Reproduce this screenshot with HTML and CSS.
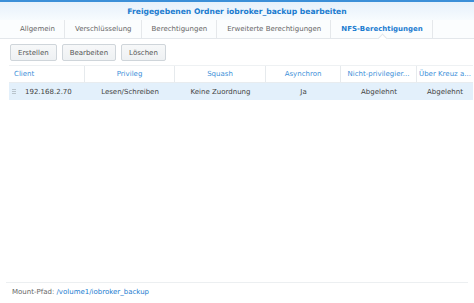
FILE: index.html
```html
<!DOCTYPE html>
<html>
<head>
<meta charset="utf-8">
<link rel="stylesheet" href="styles.css">
</head>
<body>
<div class="window">
  <div class="titlebar">Freigegebenen Ordner iobroker_backup bearbeiten</div>
  <div class="tabs">
    <div class="tab">Allgemein</div>
    <div class="tab">Verschlüsselung</div>
    <div class="tab">Berechtigungen</div>
    <div class="tab">Erweiterte Berechtigungen</div>
    <div class="tab active">NFS-Berechtigungen<span class="notch"></span></div>
  </div>
  <div class="toolbar">
    <button class="btn">Erstellen</button>
    <button class="btn">Bearbeiten</button>
    <button class="btn">Löschen</button>
  </div>
  <div class="grid">
    <div class="row head">
      <div class="cell c1 left">Client</div>
      <div class="cell c2">Privileg</div>
      <div class="cell c3">Squash</div>
      <div class="cell c4">Asynchron</div>
      <div class="cell c5">Nicht-privilegier...</div>
      <div class="cell c6">Über Kreuz a...</div>
    </div>
    <div class="row data">
      <div class="cell c1 first"><span class="handle"></span>192.168.2.70</div>
      <div class="cell c2">Lesen/Schreiben</div>
      <div class="cell c3">Keine Zuordnung</div>
      <div class="cell c4">Ja</div>
      <div class="cell c5">Abgelehnt</div>
      <div class="cell c6">Abgelehnt</div>
    </div>
  </div>
  <div class="spacer"></div>
  <div class="footer">Mount-Pfad: <span class="path">/volume1/iobroker_backup</span></div>
</div>
</body>
</html>
```
FILE: styles.css
```css
html, body {
  margin: 0;
  padding: 0;
  background: #ffffff;
}
body {
  font-family: "DejaVu Sans", Verdana, sans-serif;
  font-size: 7px;
  color: #555;
}
.window {
  width: 474px;
  height: 303px;
  display: flex;
  flex-direction: column;
  border-top: 2px solid #3b8fd8;
  box-sizing: border-box;
  background: #fff;
}
.titlebar {
  height: 18px;
  line-height: 20px;
  text-align: center;
  font-weight: bold;
  font-size: 7.6px;
  color: #1b7cd0;
  background: linear-gradient(#e6f1fb, #f7fbfe);
}
.tabs {
  display: flex;
  height: 18px;
  padding-left: 10px;
  border-bottom: 1px solid #e3e7eb;
  background: #fbfdfe;
}
.tab {
  position: relative;
  padding: 0 9px 0 10px;
  line-height: 18px;
  color: #666;
  border-right: 1px solid #e5e8eb;
}
.tab.active {
  color: #1b7cd0;
  font-weight: bold;
}
.notch {
  position: absolute;
  left: 50%;
  bottom: -4px;
  width: 6px;
  height: 6px;
  margin-left: -3px;
  background: #fff;
  border-left: 1px solid #e3e7eb;
  border-top: 1px solid #e3e7eb;
  transform: rotate(45deg);
}
.toolbar {
  display: flex;
  gap: 5px;
  padding: 5px 10px 4px;
}
.btn {
  font-family: inherit;
  font-size: 7px;
  color: #555;
  height: 17px;
  padding: 0 7px;
  background: linear-gradient(#f7f8f9, #eef1f3);
  border: 1px solid #cfd5da;
  border-radius: 2px;
}
.grid {
  display: flex;
  flex-direction: column;
}
.row {
  display: flex;
  margin: 0 1px 0 9px;
}
.head {
  height: 16px;
  border-top: 1px solid #eef1f3;
  border-bottom: 1px solid #e8ecef;
  color: #3d8fd9;
}
.head .cell {
  border-right: 1px solid #e6eaed;
}
.head .cell.c6 {
  border-right: none;
}
.data {
  height: 17px;
  background: #e3f0fb;
  color: #444;
}
.cell {
  display: flex;
  align-items: center;
  justify-content: center;
  white-space: nowrap;
  overflow: hidden;
  box-sizing: border-box;
}
.cell.left {
  justify-content: flex-start;
  padding-left: 5px;
}
.cell.first {
  justify-content: flex-start;
  padding-left: 3px;
}
.c1 { width: 76px; }
.c2 { width: 90px; }
.c3 { width: 91px; }
.c4 { width: 75px; }
.c5 { width: 76px; }
.c6 { flex: 1; }
.handle {
  width: 4px;
  height: 5px;
  margin-right: 9px;
  background: repeating-linear-gradient(#b9c4cc 0 1px, transparent 1px 2px);
}
.spacer {
  flex: 1;
}
.footer {
  margin: 0 6px 0;
  height: 18px;
  padding-left: 6px;
  line-height: 18px;
  border-top: 1px solid #eceff1;
  color: #666;
  margin-bottom: 2px;
}
.path {
  color: #1b7cd0;
}
```
